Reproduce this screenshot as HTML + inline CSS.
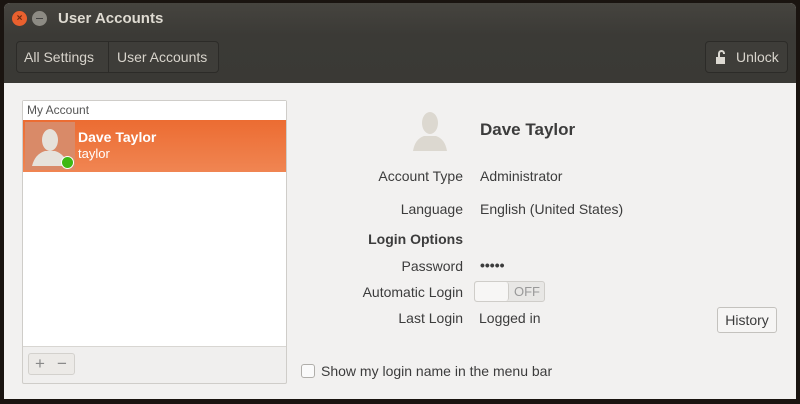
<!DOCTYPE html>
<html><head><style>
*{margin:0;padding:0;box-sizing:border-box}
body{width:800px;height:404px;background:#1a1410;font-family:"Liberation Sans",sans-serif;position:relative;overflow:hidden}
.win{position:absolute;left:4px;top:3px;width:792px;height:396px;background:#f2f1f0;border-radius:6px 6px 0 0;overflow:hidden}
.title{position:absolute;left:0;top:0;width:792px;height:80px;background:linear-gradient(#46443f,#3b3a36 40%,#3a3935)}
.t{position:absolute;color:#dfdbd2;font-size:15px;font-weight:bold}
.btn{position:absolute;border:1px solid #2c2b28;border-radius:4px;background:#3e3d39;color:#d8d4cc;font-size:14px;height:32px;line-height:30px}
.a{position:absolute;font-size:14px;color:#3c3c3c}
.r{text-align:right;width:150px}
</style></head><body>
<div class="win">
<div class="title">
 <div style="position:absolute;left:8px;top:8px;width:15px;height:15px;border-radius:50%;background:#e9602e;color:#6b2a10;font-size:10px;text-align:center;line-height:15px;font-weight:bold">×</div>
 <div style="position:absolute;left:28px;top:8px;width:15px;height:15px;border-radius:50%;background:#8d8b84"><div style="position:absolute;left:4px;top:7px;width:7px;height:1px;background:#444"></div></div>
 <div class="t" style="left:54px;top:7px">User Accounts</div>
 <div class="btn" style="left:12px;top:38px;width:203px">
  <span style="position:absolute;left:7px">All Settings</span>
  <div style="position:absolute;left:91px;top:0;width:1px;height:30px;background:#2c2b28"></div>
  <span style="position:absolute;left:100px">User Accounts</span>
 </div>
 <div class="btn" style="left:701px;top:38px;width:83px">
  <svg style="position:absolute;left:10px;top:8px" width="12" height="14"><path d="M3 7V3.5a2.5 2.5 0 0 1 5 0V4" stroke="#dcd9d2" stroke-width="2" fill="none"/><rect x="0" y="7" width="9" height="7" fill="#dcd9d2"/></svg>
  <span style="position:absolute;left:30px">Unlock</span>
 </div>
</div>
<div style="position:absolute;left:18px;top:97px;width:265px;height:284px;border:1px solid #cfcdc9;background:#f0efee;border-radius:2px">
 <div style="position:absolute;left:0;top:0;width:263px;height:246px;background:#fff;border-bottom:1px solid #d8d6d2"></div>
 <div style="position:absolute;left:4px;top:2px;font-size:12px;color:#555">My Account</div>
 <div style="position:absolute;left:0;top:19px;width:263px;height:52px;background:linear-gradient(#ec6c32,#f08552)">
  <div style="position:absolute;left:2px;top:2px;width:50px;height:48px;background:#d98a68"></div>
  <svg style="position:absolute;left:8px;top:6px" width="42" height="44"><ellipse cx="19" cy="14" rx="8" ry="11" fill="#e6e2db"/><path d="M1 40 Q4 28 14 25 L24 25 Q34 28 37 40Z" fill="#e6e2db"/></svg>
  <div style="position:absolute;left:38px;top:36px;width:13px;height:13px;border-radius:50%;background:#3db814;border:1.5px solid #fff"></div>
  <div style="position:absolute;left:55px;top:9px;color:#fff;font-weight:bold;font-size:14px">Dave Taylor</div>
  <div style="position:absolute;left:55px;top:26px;color:#fff;font-size:13px">taylor</div>
 </div>
 <div style="position:absolute;left:5px;top:252px;width:47px;height:22px;border:1px solid #d3d1cd;border-radius:3px;background:#eceae7;color:#888;font-size:17px;line-height:19px"><span style="position:absolute;left:6px">+</span><span style="position:absolute;left:28px">−</span></div>
</div>
<svg style="position:absolute;left:408px;top:108px" width="36" height="42"><ellipse cx="18" cy="12" rx="8" ry="11" fill="#dcd8d0"/><path d="M1 40 Q3 28 12 25 L24 25 Q33 28 35 40Z" fill="#dcd8d0"/></svg>
<div class="a" style="left:476px;top:117px;font-size:17px;font-weight:bold;color:#3c3c3c">Dave Taylor</div>
<div class="a r" style="left:309px;top:165px">Account Type</div><div class="a" style="left:476px;top:165px">Administrator</div>
<div class="a r" style="left:309px;top:198px">Language</div><div class="a" style="left:476px;top:198px">English (United States)</div>
<div class="a r" style="left:309px;top:228px;font-weight:bold">Login Options</div>
<div class="a r" style="left:309px;top:255px">Password</div><div class="a" style="left:476px;top:254px;font-weight:bold;letter-spacing:0px">•••••</div>
<div class="a r" style="left:309px;top:281px">Automatic Login</div>
<div style="position:absolute;left:470px;top:278px;width:71px;height:21px;border:1px solid #cfcdc9;border-radius:3px;background:#e8e7e5">
 <div style="position:absolute;left:0;top:0;width:34px;height:19px;background:#f7f6f5;border-right:1px solid #cfcdc9;border-radius:3px"></div>
 <span style="position:absolute;left:39px;top:2px;font-size:13px;color:#999">OFF</span></div>
<div class="a r" style="left:309px;top:307px">Last Login</div><div class="a" style="left:475px;top:307px">Logged in</div>
<div style="position:absolute;left:713px;top:304px;width:60px;height:26px;border:1px solid #c4c2be;border-radius:3px;background:#f6f5f4;font-size:14px;color:#3c3c3c;text-align:center;line-height:24px">History</div>
<div style="position:absolute;left:297px;top:361px;width:14px;height:14px;border:1px solid #b0aeaa;border-radius:3px;background:#fafafa"></div>
<div class="a" style="left:317px;top:360px">Show my login name in the menu bar</div>
</div>
</body></html>
